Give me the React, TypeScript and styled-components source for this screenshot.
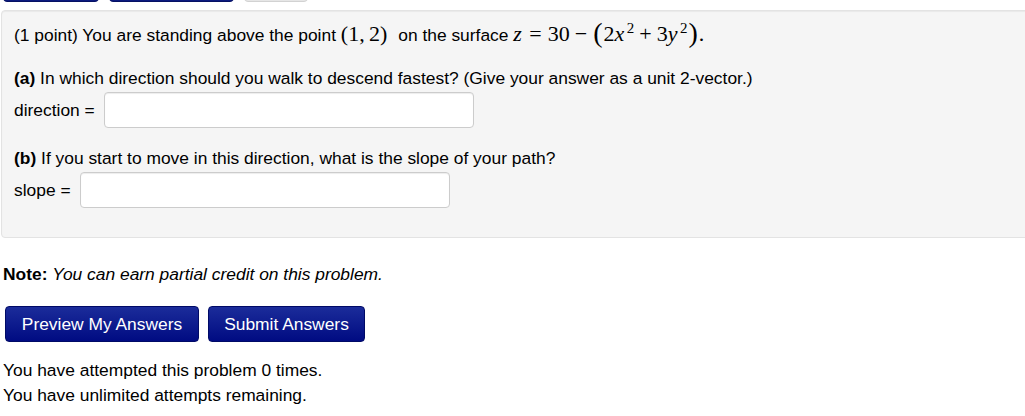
import React from 'react';
import styled, { createGlobalStyle } from 'styled-components';

const Global = createGlobalStyle`
  html, body {
    margin: 0;
    padding: 0;
    overflow: hidden;
    background: #fff;
  }
  body {
    font-family: "Liberation Sans", Arial, sans-serif;
    font-size: 17.4px;
    color: #000;
  }
`;

const Page = styled.div`
  width: 1025px;
  padding-left: 1px;
  box-sizing: border-box;
`;

const TopBar = styled.div`
  display: flex;
  gap: 10px;
  margin-top: -30px;
  padding-left: 2px;
  height: 32px;
`;

const TopButton = styled.div<{ $w: number; $grey?: boolean }>`
  width: ${(p) => p.$w}px;
  height: 32px;
  border-radius: 4px;
  background: ${(p) => (p.$grey ? '#e6e6e6' : '#0b1a7e')};
  border: 1px solid ${(p) => (p.$grey ? '#d2d2d2' : '#061163')};
  box-sizing: border-box;
`;

const ProblemBox = styled.div`
  margin-top: 8px;
  width: 1060px;
  height: 228px;
  background: #f5f5f5;
  border: 1px solid #e3e3e3;
  border-radius: 4px;
  box-shadow: inset 0 1px 1px rgba(0, 0, 0, 0.05);
  padding: 14px 12px 0;
  box-sizing: border-box;
`;

const Line = styled.div<{ $top?: number }>`
  height: 20px;
  line-height: 20px;
  margin-top: ${(p) => p.$top ?? 0}px;
  white-space: nowrap;
`;

const Math = styled.span<{ $after?: number }>`
  font-family: "Liberation Serif", "Times New Roman", serif;
  font-size: 22px;
  line-height: 0;
  margin-right: ${(p) => p.$after ?? 0}px;
`;

const Var = styled.i`
  font-family: "Liberation Serif", "Times New Roman", serif;
  margin-right: 1.5px;
`;

const Op = styled.span<{ $gap: number }>`
  margin: 0 ${(p) => p.$gap}px;
`;

const Sup = styled.span`
  font-size: 15px;
  position: relative;
  top: -8px;
  line-height: 0;
  margin-left: 1px;
`;

const BigParen = styled.span`
  font-size: 28px;
  line-height: 0;
  position: relative;
  top: 1px;
  margin: 0 1px;
`;

const AnswerRow = styled.div`
  display: flex;
  align-items: center;
  gap: 9px;
  margin-top: 4px;
`;

const AnswerInput = styled.input`
  width: 370px;
  height: 36px;
  box-sizing: border-box;
  border: 1px solid #cccccc;
  border-radius: 4px;
  background: #fff;
  box-shadow: inset 0 1px 1px rgba(0, 0, 0, 0.075);
  font-size: 16px;
  padding: 4px 6px;
  outline: none;
`;

const Note = styled.div`
  margin: 26px 0 0 2px;
  line-height: 20px;
  em {
    font-style: italic;
  }
`;

const ButtonRow = styled.div`
  display: flex;
  gap: 9px;
  margin: 22px 0 0 4px;
`;

const SubmitButton = styled.button<{ $w: number }>`
  width: ${(p) => p.$w}px;
  height: 36px;
  border-radius: 4px;
  border: 1px solid #000a66;
  background: linear-gradient(to bottom, #1b2c9a, #000b82);
  color: #fff;
  font-family: "Liberation Sans", Arial, sans-serif;
  font-size: 17.4px;
  padding: 0;
  cursor: pointer;
`;

const Attempts = styled.div`
  margin: 16px 0 0 2px;
  line-height: 25px;
`;

export default function App() {
  return (
    <>
      <Global />
      <Page>
        <TopBar>
          <TopButton $w={96} />
          <TopButton $w={125} />
          <TopButton $w={64} $grey />
        </TopBar>
        <ProblemBox>
          <Line>
            (1 point) You are standing above the point <Math $after={6}>(1,&thinsp;2)</Math> on the surface{' '}
            <Math>
              <Var>z</Var>
              <Op $gap={6}>=</Op>30<Op $gap={5}>−</Op>
              <BigParen>(</BigParen>2<Var>x</Var>
              <Sup>2</Sup>
              <Op $gap={5}>+</Op>3<Var>y</Var>
              <Sup>2</Sup>
              <BigParen>)</BigParen>.
            </Math>
          </Line>
          <Line $top={23}>
            <b>(a)</b> In which direction should you walk to descend fastest? (Give your answer as a unit 2-vector.)
          </Line>
          <AnswerRow>
            <span>direction =</span>
            <AnswerInput type="text" />
          </AnswerRow>
          <Line $top={20}>
            <b>(b)</b> If you start to move in this direction, what is the slope of your path?
          </Line>
          <AnswerRow>
            <span>slope =</span>
            <AnswerInput type="text" />
          </AnswerRow>
        </ProblemBox>
        <Note>
          <b>Note:</b> <em>You can earn partial credit on this problem.</em>
        </Note>
        <ButtonRow>
          <SubmitButton $w={194}>Preview My Answers</SubmitButton>
          <SubmitButton $w={157}>Submit Answers</SubmitButton>
        </ButtonRow>
        <Attempts>
          You have attempted this problem 0 times.
          <br />
          You have unlimited attempts remaining.
        </Attempts>
      </Page>
    </>
  );
}
